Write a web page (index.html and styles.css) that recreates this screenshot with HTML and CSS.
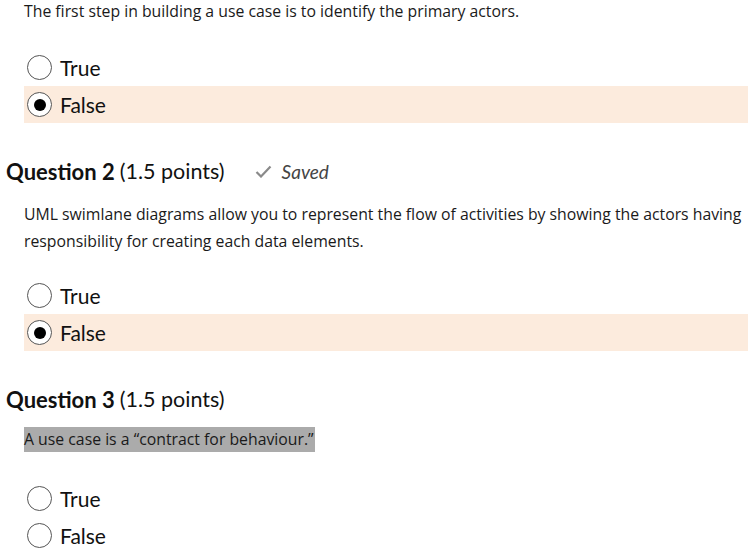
FILE: index.html
```html
<!DOCTYPE html>
<html>
<head>
<meta charset="utf-8">
<link rel="stylesheet" href="styles.css">
</head>
<body>
<div class="page">
  <section class="q q1">
    <p class="prompt">The first step in building a use case is to identify the primary actors.</p>
    <div class="options">
      <div class="opt"><span class="radio"></span><span class="label">True</span></div>
      <div class="opt sel"><span class="radio on"></span><span class="label">False</span></div>
    </div>
  </section>

  <section class="q">
    <h2 class="qh"><b>Question 2</b> <span class="pts">(1.5 points)</span>
      <span class="saved"><svg class="check" width="17" height="13" viewBox="0 0 17 13"><path d="M1.5 7 L6 11.5 L15.5 1.5" fill="none" stroke="#8a8a8a" stroke-width="2.2"/></svg><i>Saved</i></span>
    </h2>
    <p class="prompt two">UML swimlane diagrams allow you to represent the flow of activities by showing the actors having responsibility for creating each data elements.</p>
    <div class="options">
      <div class="opt"><span class="radio"></span><span class="label">True</span></div>
      <div class="opt sel"><span class="radio on"></span><span class="label">False</span></div>
    </div>
  </section>

  <section class="q">
    <h2 class="qh"><b>Question 3</b> <span class="pts">(1.5 points)</span></h2>
    <p class="prompt hl"><span>A use case is a “contract for behaviour.”</span></p>
    <div class="options">
      <div class="opt"><span class="radio"></span><span class="label">True</span></div>
      <div class="opt"><span class="radio"></span><span class="label">False</span></div>
    </div>
  </section>
</div>
</body>
</html>
```

FILE: styles.css
```css
* { box-sizing: border-box; }
html, body { margin: 0; padding: 0; background: #fff; }
body { width: 748px; height: 555px; overflow: hidden; color: #111; }
.page { display: flex; flex-direction: column; }
.prompt {
  margin: 0;
  padding-left: 24px;
  font-family: "Open Sans", sans-serif;
  font-size: 15.8px;
  line-height: 27px;
  color: #1a1a1a;
}
.q1 .prompt { margin-top: -2px; }
.options { display: flex; flex-direction: column; }
.q1 .options { margin-top: 24px; }
.opt {
  display: flex;
  align-items: center;
  height: 37px;
  margin-left: 24px;
  padding-left: 3px;
  font-family: Lato, sans-serif;
  font-size: 21px;
  color: #111;
}
.opt.sel { background: #fcebdd; }
.radio {
  width: 25px; height: 25px;
  border: 1.5px solid #555;
  border-radius: 50%;
  background: #fff;
  display: flex; align-items: center; justify-content: center;
  margin-right: 8px;
}
.radio.on::after {
  content: "";
  width: 12px; height: 12px; border-radius: 50%; background: #000;
}
.qh {
  margin: 0;
  padding-left: 6px;
  font-family: Lato, sans-serif;
  font-weight: normal;
  font-size: 22px;
  display: flex;
  align-items: center;
  height: 30px;
  margin-top: 33px;
  color: #111;
}
.qh b { font-weight: bold; margin-right: 5px; }
.pts { font-size: 21.5px; }
.saved {
  display: inline-flex; align-items: center;
  margin-left: 30px;
  font-family: Lato, sans-serif;
  font-size: 19px;
  color: #444;
}
.check { margin-right: 10px; }
.two { margin-top: 15px; }
.two + .options { margin-top: 22px; }
.hl { margin-top: 12px; }
.hl span { background: #ababab; display: inline-block; line-height: 25px; padding-right: 1px; }
.hl + .options { margin-top: 27px; }
```
